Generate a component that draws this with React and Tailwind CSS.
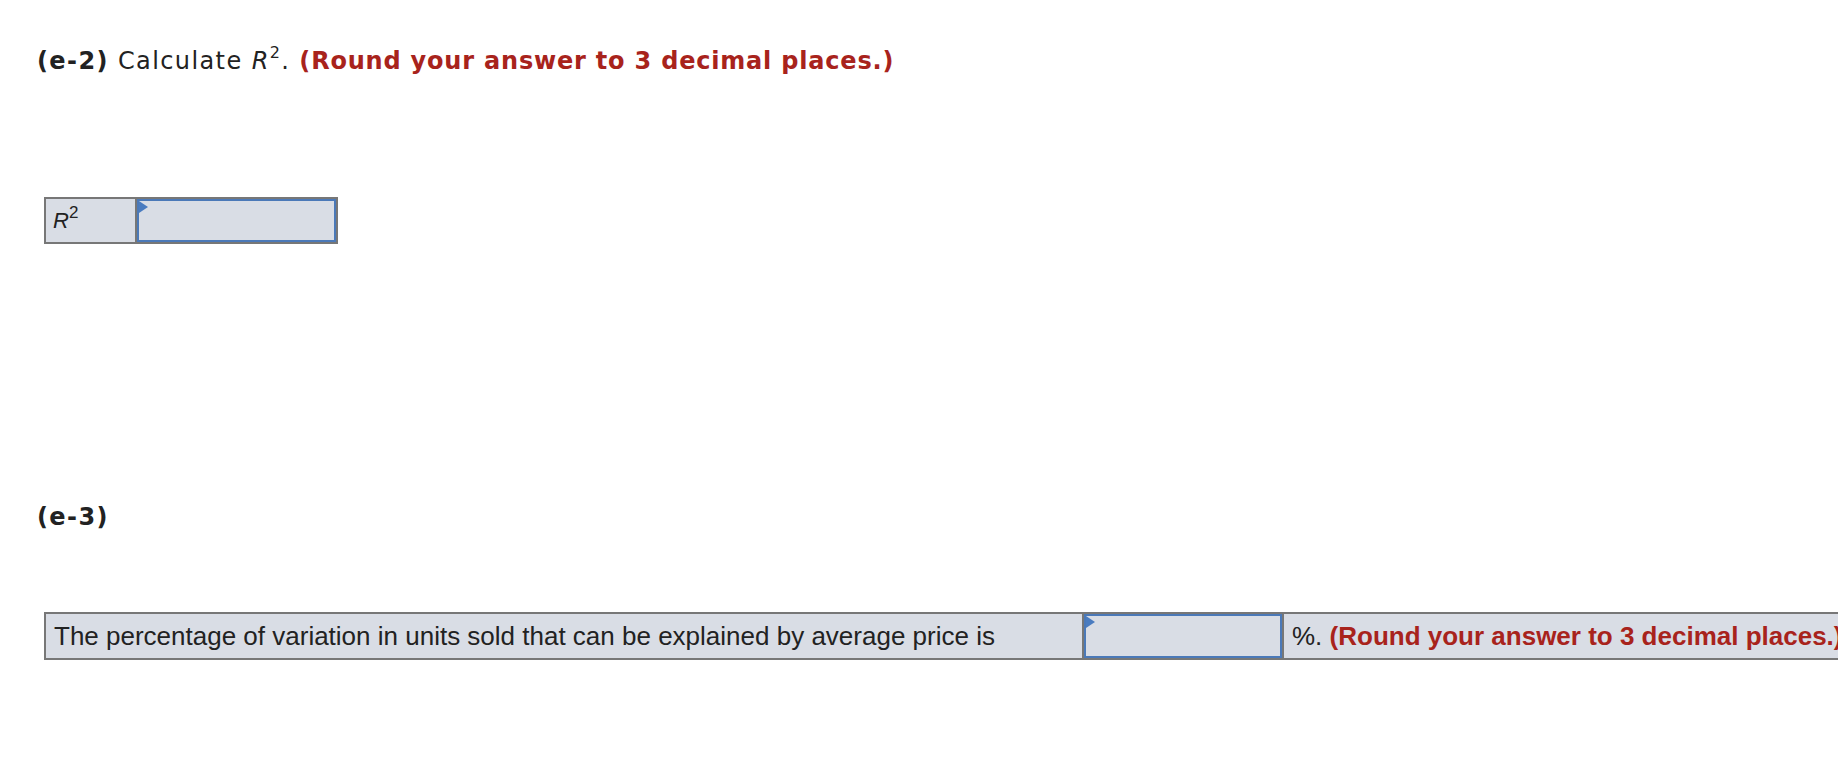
import React from "react";

const Flag = () => (
  <svg className="absolute left-0 top-0" width="10" height="12" viewBox="0 0 10 12">
    <path d="M0 0 L9 6 L0 12 Z" fill="#4a7cc0" />
  </svg>
);

function AnswerBox({ className }) {
  return (
    <div className={`relative h-full border-2 border-[#4b79b8] bg-[#d9dde5] ${className}`}>
      <Flag />
    </div>
  );
}

export default function App() {
  return (
    <div className="min-h-screen w-full overflow-hidden bg-white text-[#222]">
      {/* e-2 */}
      <h2 className="whitespace-nowrap pl-[37px] pt-[44px] font-['DejaVu_Sans',sans-serif] text-[24px] leading-[34px] tracking-[1.4px] text-[#222]">
        <span className="font-bold">(e-2)</span> Calculate <i>R</i>
        <span className="relative bottom-[11px] text-[16px]">2</span>.{" "}
        <span className="font-bold tracking-[0.8px] text-[#a8231c]">(Round your answer to 3 decimal places.)</span>
      </h2>

      <div className="ml-[44px] mt-[116px] flex h-[47px] w-[294px] border-2 border-[#777]">
        <div className="flex w-[91px] items-center border-r-2 border-[#777] bg-[#d9dde5] pl-[7px] font-['Liberation_Sans',Arial,sans-serif] text-[22px] text-[#222]">
          <i>R</i>
          <span className="relative bottom-[8px] text-[17px]">2</span>
        </div>
        <AnswerBox className="flex-1" />
      </div>

      {/* e-3 */}
      <h2 className="pl-[37px] pt-[256px] font-['DejaVu_Sans',sans-serif] text-[24px] font-bold leading-[34px] tracking-[1.4px] text-[#222]">
        (e-3)
      </h2>

      <div className="ml-[44px] mt-[78px] flex h-[48px] w-[2000px] border-y-2 border-l-2 border-[#777] bg-[#d9dde5] font-['Liberation_Sans',Arial,sans-serif] text-[26px] text-[#222]">
        <div className="flex w-[1038px] shrink-0 items-center whitespace-nowrap border-r-2 border-[#777] pl-[8px]">
          The percentage of variation in units sold that can be explained by average price is
        </div>
        <AnswerBox className="w-[198px] shrink-0" />
        <div className="flex items-center whitespace-nowrap border-l-2 border-[#777] pl-[8px]">
          %.&nbsp;
          <span className="font-bold text-[#a8231c]">(Round your answer to 3 decimal places.)</span>
        </div>
      </div>
    </div>
  );
}
